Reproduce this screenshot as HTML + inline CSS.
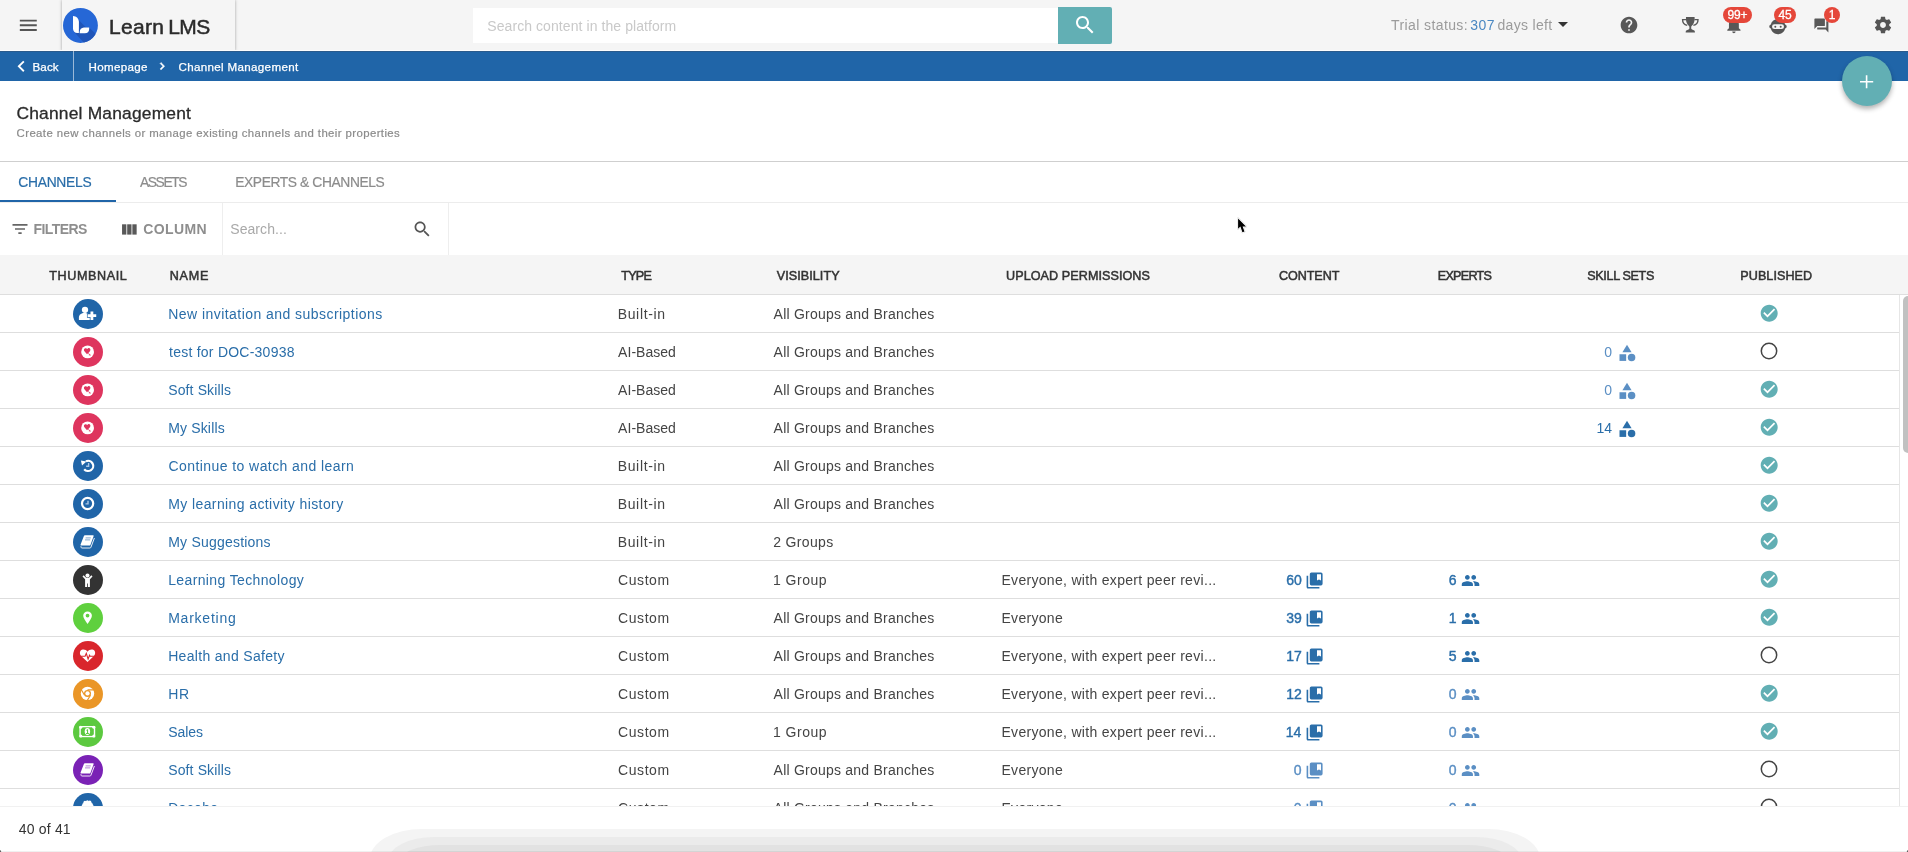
<!DOCTYPE html>
<html lang="en"><head><meta charset="utf-8"><title>Channel Management</title>
<style>
html,body{margin:0;padding:0}
body{width:1908px;height:852px;position:relative;overflow:hidden;background:#fff;font-family:"Liberation Sans",sans-serif}
.a{position:absolute;display:block}
.t{position:absolute;white-space:pre;line-height:1;margin:0;padding:0}
.ln{position:absolute;left:0;width:1899px;height:1px;background:#dedede}
.th{position:absolute;width:30px;height:30px;border-radius:50%;left:73px}
.bd{position:absolute;top:7px;height:16px;border-radius:8px;background:#e5473a;color:#fff;font-size:12px;font-weight:400;-webkit-text-stroke:0.3px #fff;line-height:16.500px;letter-spacing:-0.2px;text-align:center}
</style></head><body><div id="w" class="a" style="left:0;top:0;width:1908px;height:852px;will-change:transform">

<div class="a" style="left:0;top:0;width:1908px;height:51px;background:#f5f5f5"></div>
<div class="a" style="left:62px;top:0;width:173px;height:51px;background:#f5f5f5;box-shadow:0 0 3px rgba(0,0,0,.35)"></div>
<div class="a" style="left:0;top:51px;width:1908px;height:30px;background:#2065a8"></div>
<div class="a" style="left:0;top:50px;width:1908px;height:1px;background:#fdfdfd"></div>
<div class="a" style="left:0;top:51px;width:1908px;height:1px;background:#2b5b8c"></div>
<svg class="a" style="left:16.87px;top:13.84px" width="22.6" height="22.6" viewBox="0 0 24 24" fill="#555" ><path d="M3 18h18v-2H3v2zm0-5h18v-2H3v2zm0-7v2h18V6H3z"/></svg>
<svg class="a" style="left:63.100px;top:7.900px" width="34.900" height="34.900" viewBox="0 0 34.900 34.900"><defs><clipPath id="lc"><circle cx="17.450" cy="17.450" r="17.450"/></clipPath></defs><circle cx="17.450" cy="17.450" r="17.450" fill="#2667d6"/><path clip-path="url(#lc)" d="M15.900 12.300l7.200 7.300 3.100-.200 10 10-12 9-13.200-14.600 4.900-.5z" fill="#2055b8"/><path d="M10 8.100c3.500.200 5.900 2.600 5.900 6.200v10.800h-1.500c-2.700 0-4.400-2-4.400-4.700z" fill="#fff"/><path d="M26.200 19.400v1.500c0 2.600-1.700 4.400-4.300 4.400h-5.200v-1.300c0-2.500 1.700-4.300 4.300-4.400z" fill="#fff"/></svg>
<div class="a" style="left:473px;top:8px;width:586px;height:35px;background:#fff"></div>
<div class="a" style="left:1058px;top:7px;width:54px;height:37px;background:#62afb4;border-radius:0 2px 2px 0"></div>
<svg class="a" style="left:1073.2px;top:12.8px" width="24" height="24" viewBox="0 0 24 24" fill="#fff" ><path d="M15.5 14h-.79l-.28-.27C15.41 12.59 16 11.11 16 9.5 16 5.91 13.09 3 9.5 3S3 5.91 3 9.5 5.91 16 9.5 16c1.61 0 3.09-.59 4.23-1.57l.27.28v.79l5 4.99L20.49 19l-4.99-5zm-6 0C7.01 14 5 11.99 5 9.5S7.01 5 9.5 5 14 7.01 14 9.5 11.99 14 9.5 14z"/></svg>
<svg class="a" style="left:1550.9px;top:12.4px" width="24" height="24" viewBox="0 0 24 24" fill="#333" ><path d="M7 10l5 5 5-5z"/></svg>
<svg class="a" style="left:1619.4px;top:14.8px" width="20" height="20" viewBox="0 0 24 24" fill="#585858" ><path d="M12 2C6.48 2 2 6.48 2 12s4.48 10 10 10 10-4.48 10-10S17.52 2 12 2zm1 17h-2v-2h2v2zm2.07-7.75l-.9.92C13.45 12.9 13 13.5 13 15h-2v-.5c0-1.1.45-2.1 1.17-2.83l1.24-1.26c.37-.36.59-.86.59-1.41 0-1.1-.9-2-2-2s-2 .9-2 2H8c0-2.21 1.79-4 4-4s4 1.79 4 4c0 .88-.36 1.68-.93 2.25z"/></svg>
<svg class="a" style="left:1681px;top:16.100px" width="18.600" height="17" viewBox="0 0 18.600 17"><path fill="#585858" d="M5 .9h8.600c.1 2.300 0 4-.6 5.600-.5 1.500-1.300 2.700-2.400 3.500-.3.300-.4.600-.4 1v1.200c0 .6.300 1 .9 1.300l1.700.7c.7.300 1.100.8 1.100 1.500v.7h-9.200v-.7c0-.7.400-1.200 1.100-1.500l1.700-.7c.6-.300.900-.7.900-1.300v-1.200c0-.4-.1-.7-.4-1-1.100-.8-1.900-2-2.400-3.500-.6-1.600-.7-3.300-.6-5.600z"/><path fill="none" stroke="#585858" stroke-width="1.400" d="M5.200 3.600h-3.600c-.1 3 1.600 5.200 4.600 5.800M13.400 3.600h3.600c.1 3-1.600 5.200-4.600 5.800"/></svg>
<svg class="a" style="left:1724.0px;top:14.85px" width="19.8" height="19.8" viewBox="0 0 24 24" fill="#585858" ><path d="M12 22c1.1 0 2-.9 2-2h-4c0 1.1.89 2 2 2zm6-6v-5c0-3.07-1.64-5.64-4.5-6.32V4c0-.83-.67-1.5-1.5-1.5s-1.5.67-1.5 1.5v.68C7.63 5.36 6 7.92 6 11v5l-2 2v1h16v-1l-2-2z"/></svg>
<svg class="a" style="left:1769px;top:19px" width="18" height="15.500" viewBox="0 0 18 15.500"><path fill="#555" d="M9 0c3.600 0 6.500 2.300 7.100 5.600.9.200 1.600 1 1.600 2s-.7 1.800-1.600 2c-.6 3.300-3.500 5.600-7.100 5.600s-6.500-2.300-7.100-5.600c-.9-.2-1.600-1-1.600-2s.7-1.800 1.600-2c.6-3.300 3.500-5.600 7.100-5.600z"/><rect x="3" y="5.300" width="12" height="4.800" rx="2.400" fill="#f5f5f5"/><circle cx="6.300" cy="7.700" r="1" fill="#555"/><circle cx="11.700" cy="7.700" r="1" fill="#555"/></svg>
<svg class="a" style="left:1813.4px;top:16.6px" width="16.8" height="16.8" viewBox="0 0 24 24" fill="#585858" ><path d="M21 6h-2v9H6v2c0 .55.45 1 1 1h11l4 4V7c0-.55-.45-1-1-1zm-4 6V3c0-.55-.45-1-1-1H3c-.55 0-1 .45-1 1v14l4-4h10c.55 0 1-.45 1-1z"/></svg>
<svg class="a" style="left:1873px;top:15px" width="20" height="20" viewBox="0 0 24 24" fill="#555" ><path d="M19.43 12.98c.04-.32.07-.64.07-.98s-.03-.66-.07-.98l2.11-1.65c.19-.15.24-.42.12-.64l-2-3.46c-.12-.22-.39-.3-.61-.22l-2.49 1c-.52-.4-1.08-.73-1.69-.98l-.38-2.65C14.46 2.18 14.25 2 14 2h-4c-.25 0-.46.18-.49.42l-.38 2.65c-.61.25-1.17.59-1.69.98l-2.49-1c-.23-.09-.49 0-.61.22l-2 3.46c-.13.22-.07.49.12.64l2.11 1.65c-.04.32-.07.65-.07.98s.03.66.07.98l-2.11 1.65c-.19.15-.24.42-.12.64l2 3.46c.12.22.39.3.61.22l2.49-1c.52.4 1.08.73 1.69.98l.38 2.65c.03.24.24.42.49.42h4c.25 0 .46-.18.49-.42l.38-2.65c.61-.25 1.17-.59 1.69-.98l2.49 1c.23.09.49 0 .61-.22l2-3.46c.12-.22.07-.49-.12-.64l-2.11-1.65zM12 15.5c-1.93 0-3.5-1.57-3.5-3.5s1.57-3.5 3.5-3.5 3.5 1.57 3.5 3.5-1.57 3.5-3.5 3.5z"/></svg>
<div class="bd" style="left:1723px;width:29px">99+</div>
<div class="bd" style="left:1774px;width:22px">45</div>
<div class="bd" style="left:1824px;width:16px">1</div>
<div class="a" style="left:73px;top:51px;width:1px;height:30px;background:rgba(255,255,255,.55)"></div>
<svg class="a" style="left:9.7px;top:54.8px" width="22.6" height="22.6" viewBox="0 0 24 24" fill="#fff" ><path d="M15.41 7.41L14 6l-6 6 6 6 1.41-1.41L10.83 12z"/></svg>
<svg class="a" style="left:155.3px;top:58.8px" width="14.4" height="14.4" viewBox="0 0 24 24" fill="#fff" stroke="#fff" stroke-width="1"><path d="M10 6L8.59 7.41 13.17 12l-4.58 4.59L10 18l6-6z"/></svg>
<div class="a" style="left:1842px;top:56px;width:50px;height:50px;border-radius:50%;background:#62afb4;box-shadow:0 3px 5px rgba(0,0,0,.3)"></div>
<svg class="a" style="left:1856px;top:71px" width="22" height="22" viewBox="1856 71 22 22"><path d="M1860 81.750h13.200M1866.600 75.150v13.200" stroke="#fff" stroke-width="1.600" fill="none"/></svg>
<div class="a" style="left:0;top:161px;width:1908px;height:1px;background:#cfcfcf"></div>
<div class="a" style="left:0;top:202px;width:1908px;height:1px;background:#ececec"></div>
<div class="a" style="left:0;top:200px;width:116px;height:2px;background:#2065a8"></div>
<div class="a" style="left:222px;top:203px;width:1px;height:52px;background:#eee"></div>
<div class="a" style="left:448px;top:203px;width:1px;height:52px;background:#eee"></div>
<svg class="a" style="left:10.0px;top:219.25px" width="20" height="20" viewBox="0 0 24 24" fill="#666" ><path d="M10 18h4v-2h-4v2zM3 6v2h18V6H3zm3 7h12v-2H6v2z"/></svg>
<svg class="a" style="left:120px;top:220px" width="20" height="20" viewBox="120 220 20 20" fill="#595959"><rect x="122.050" y="224.300" width="4.300" height="10.300"/><rect x="127.200" y="224.300" width="4.300" height="10.300"/><rect x="132.350" y="224.300" width="4.300" height="10.300"/></svg>
<svg class="a" style="left:412.4px;top:219.2px" width="20.5" height="20.5" viewBox="0 0 24 24" fill="#555" ><path d="M15.5 14h-.79l-.28-.27C15.41 12.59 16 11.11 16 9.5 16 5.91 13.09 3 9.5 3S3 5.91 3 9.5 5.91 16 9.5 16c1.61 0 3.09-.59 4.23-1.57l.27.28v.79l5 4.99L20.49 19l-4.99-5zm-6 0C7.01 14 5 11.99 5 9.5S7.01 5 9.5 5 14 7.01 14 9.5 11.99 14 9.5 14z"/></svg>
<div class="a" style="left:0;top:255px;width:1908px;height:40px;background:#f5f5f5"></div>
<div class="ln" style="top:294px;width:1908px"></div>
<div class="ln" style="top:332px"></div>
<div class="th" style="top:299px;background:#2065a8"><svg class="a" style="left:0;top:0" width="30" height="30" viewBox="0 0 30 30" fill="#fff"><circle cx="12" cy="10.800" r="3.150"/><path d="M5.900 21v-2.300c0-3.100 2.400-4.700 5.500-4.700s5.500 1.600 5.500 4.700v2.300z"/><path stroke="#2065a8" stroke-width="1.300" d="M17.500 12.500h2.800v2.800h2.900v2.800h-2.900v2.800h-2.800v-2.800h-2.900v-2.800h2.900z"/><path d="M17.500 12.500h2.800v2.800h2.900v2.800h-2.900v2.800h-2.800v-2.800h-2.900v-2.800h2.900z"/></svg></div>
<svg class="a" style="left:1758.8px;top:302.7px" width="20.4" height="20.4" viewBox="0 0 24 24" fill="#62afb4" ><path d="M12 2C6.48 2 2 6.48 2 12s4.48 10 10 10 10-4.48 10-10S17.52 2 12 2zm-2 15l-5-5 1.41-1.41L10 14.17l7.59-7.59L19 8l-9 9z"/></svg>
<div class="ln" style="top:370px"></div>
<div class="th" style="top:337px;background:#de355e"><svg class="a" style="left:0;top:0" width="30" height="30" viewBox="0 0 30 30" fill="#fff"><circle cx="14.600" cy="14.900" r="6.400"/><path fill="#de355e" d="M14 17.200l-2.800-3.200c-1-1.700.4-3.400 2-2.700l.9.800 1-.9c1.600-.700 3 1 2 2.700l-1.700 2.200 1.300 1.300.2-.9.900 2.300-2.400-.8.900-.2-1.300-1.500z"/></svg></div>
<svg class="a" style="left:1616.5px;top:343.3px" width="20" height="20" viewBox="0 0 24 24" fill="#5b8fc4"><path d="M12 2l-5.500 9h11z"/><circle cx="17.500" cy="17.500" r="4.500"/><path d="M3 13.500h8v8H3z"/></svg>
<svg class="a" style="left:1759px;top:341.0px" width="20" height="20" viewBox="0 0 20 20"><circle cx="10" cy="10" r="7.700" fill="none" stroke="#444" stroke-width="1.500"/></svg>
<div class="ln" style="top:408px"></div>
<div class="th" style="top:375px;background:#de355e"><svg class="a" style="left:0;top:0" width="30" height="30" viewBox="0 0 30 30" fill="#fff"><circle cx="14.600" cy="14.900" r="6.400"/><path fill="#de355e" d="M14 17.200l-2.800-3.200c-1-1.700.4-3.400 2-2.700l.9.800 1-.9c1.600-.700 3 1 2 2.700l-1.700 2.200 1.300 1.300.2-.9.900 2.300-2.400-.8.900-.2-1.300-1.500z"/></svg></div>
<svg class="a" style="left:1616.5px;top:381.3px" width="20" height="20" viewBox="0 0 24 24" fill="#5b8fc4"><path d="M12 2l-5.500 9h11z"/><circle cx="17.500" cy="17.500" r="4.500"/><path d="M3 13.500h8v8H3z"/></svg>
<svg class="a" style="left:1758.8px;top:378.7px" width="20.4" height="20.4" viewBox="0 0 24 24" fill="#62afb4" ><path d="M12 2C6.48 2 2 6.48 2 12s4.48 10 10 10 10-4.48 10-10S17.52 2 12 2zm-2 15l-5-5 1.41-1.41L10 14.17l7.59-7.59L19 8l-9 9z"/></svg>
<div class="ln" style="top:446px"></div>
<div class="th" style="top:413px;background:#de355e"><svg class="a" style="left:0;top:0" width="30" height="30" viewBox="0 0 30 30" fill="#fff"><circle cx="14.600" cy="14.900" r="6.400"/><path fill="#de355e" d="M14 17.200l-2.800-3.200c-1-1.700.4-3.400 2-2.700l.9.800 1-.9c1.600-.700 3 1 2 2.700l-1.700 2.200 1.300 1.300.2-.9.900 2.300-2.400-.8.900-.2-1.300-1.500z"/></svg></div>
<svg class="a" style="left:1616.5px;top:419.3px" width="20" height="20" viewBox="0 0 24 24" fill="#2a6ea9"><path d="M12 2l-5.500 9h11z"/><circle cx="17.500" cy="17.500" r="4.500"/><path d="M3 13.500h8v8H3z"/></svg>
<svg class="a" style="left:1758.8px;top:416.7px" width="20.4" height="20.4" viewBox="0 0 24 24" fill="#62afb4" ><path d="M12 2C6.48 2 2 6.48 2 12s4.48 10 10 10 10-4.48 10-10S17.52 2 12 2zm-2 15l-5-5 1.41-1.41L10 14.17l7.59-7.59L19 8l-9 9z"/></svg>
<div class="ln" style="top:484px"></div>
<div class="th" style="top:451px;background:#2065a8"><svg class="a" style="left:0;top:0" width="30" height="30" viewBox="0 0 30 30" fill="#fff"><path fill="none" stroke="#fff" stroke-width="2.200" d="M12.940 10.280A5.100 5.100 0 1 1 11.200 18.180"/><path d="M7.900 9.400l5.600 1.200-4.500 4z"/><path fill="none" stroke="#a9c6e6" stroke-width="1.400" d="M15.600 12v3.200h-2.500"/></svg></div>
<svg class="a" style="left:1758.8px;top:454.7px" width="20.4" height="20.4" viewBox="0 0 24 24" fill="#62afb4" ><path d="M12 2C6.48 2 2 6.48 2 12s4.48 10 10 10 10-4.48 10-10S17.52 2 12 2zm-2 15l-5-5 1.41-1.41L10 14.17l7.59-7.59L19 8l-9 9z"/></svg>
<div class="ln" style="top:522px"></div>
<div class="th" style="top:489px;background:#2065a8"><svg class="a" style="left:0;top:0" width="30" height="30" viewBox="0 0 30 30" fill="#fff"><circle cx="14.600" cy="14.500" r="5.600" fill="none" stroke="#fff" stroke-width="2.200"/><path fill="none" stroke="#a9c6e6" stroke-width="1.400" d="M15 11.700v3.200h-2.500"/></svg></div>
<svg class="a" style="left:1758.8px;top:492.7px" width="20.4" height="20.4" viewBox="0 0 24 24" fill="#62afb4" ><path d="M12 2C6.48 2 2 6.48 2 12s4.48 10 10 10 10-4.48 10-10S17.52 2 12 2zm-2 15l-5-5 1.41-1.41L10 14.17l7.59-7.59L19 8l-9 9z"/></svg>
<div class="ln" style="top:560px"></div>
<div class="th" style="top:527px;background:#2065a8"><svg class="a" style="left:0;top:0" width="30" height="30" viewBox="0 0 30 30" fill="#fff"><path d="M11.900 8.300h8c.6 0 .9.400.7 1l-3.200 8.600c-.1.400-.4.600-.9.600h-8.200c-.6 0-.9-.500-.7-1l3.300-8.500c.2-.5.500-.7 1-.7z"/><path fill="none" stroke="#fff" stroke-width=".9" d="M7.900 19.200l.3 1.300c.1.400.3.500.7.500h8c.5 0 .8-.2 1-.7l3.500-9.300"/><path fill="none" stroke="#2065a8" stroke-opacity=".55" stroke-width="1" d="M12.600 10.900h5.200M12 12.900h5.200"/></svg></div>
<svg class="a" style="left:1758.8px;top:530.7px" width="20.4" height="20.4" viewBox="0 0 24 24" fill="#62afb4" ><path d="M12 2C6.48 2 2 6.48 2 12s4.48 10 10 10 10-4.48 10-10S17.52 2 12 2zm-2 15l-5-5 1.41-1.41L10 14.17l7.59-7.59L19 8l-9 9z"/></svg>
<div class="ln" style="top:598px"></div>
<div class="th" style="top:565px;background:#333333"><svg class="a" style="left:0;top:0" width="30" height="30" viewBox="0 0 30 30" fill="#fff"><circle cx="14.500" cy="10.500" r="2.050"/><path d="M10.600 10.300l2.500 2.500h2.800l2.500-2.500 1.100 1.100-2.600 2.800v7.900h-2v-3.700h-.8v3.700h-2v-7.900l-2.600-2.800z"/></svg></div>
<svg class="a" style="left:1305.1px;top:570.5px" width="19.2" height="19.2" viewBox="0 0 24 24" fill="#2a6ea9" ><path d="M4 6H2v14c0 1.1.9 2 2 2h14v-2H4V6zm16-4H8c-1.1 0-2 .9-2 2v12c0 1.1.9 2 2 2h12c1.1 0 2-.9 2-2V4c0-1.1-.9-2-2-2zm0 10l-2.5-1.5L15 12V4h5v8z"/></svg>
<svg class="a" style="left:1460.9px;top:570.7px" width="19.1" height="19.1" viewBox="0 0 24 24" fill="#2a6ea9" ><path d="M16 11c1.66 0 2.99-1.34 2.99-3S17.66 5 16 5c-1.66 0-3 1.34-3 3s1.34 3 3 3zm-8 0c1.66 0 2.99-1.34 2.99-3S9.66 5 8 5C6.34 5 5 6.34 5 8s1.34 3 3 3zm0 2c-2.33 0-7 1.17-7 3.5V19h14v-2.5c0-2.33-4.67-3.5-7-3.5zm8 0c-.29 0-.62.02-.97.05 1.16.84 1.97 1.97 1.97 3.45V19h6v-2.5c0-2.33-4.67-3.5-7-3.5z"/></svg>
<svg class="a" style="left:1758.8px;top:568.7px" width="20.4" height="20.4" viewBox="0 0 24 24" fill="#62afb4" ><path d="M12 2C6.48 2 2 6.48 2 12s4.48 10 10 10 10-4.48 10-10S17.52 2 12 2zm-2 15l-5-5 1.41-1.41L10 14.17l7.59-7.59L19 8l-9 9z"/></svg>
<div class="ln" style="top:636px"></div>
<div class="th" style="top:603px;background:#5fd03e"><svg class="a" style="left:0;top:0" width="30" height="30" viewBox="0 0 30 30" fill="#fff"><path fill-rule="evenodd" d="M14.550 8.400c2.500 0 4.350 1.900 4.350 4.300 0 2.100-2.350 5.200-4.350 8.300-2-3.100-4.350-6.200-4.350-8.300 0-2.400 1.850-4.300 4.350-4.300zm0 2.300a1.900 1.900 0 1 0 0 3.800 1.900 1.900 0 0 0 0-3.800z"/></svg></div>
<svg class="a" style="left:1305.1px;top:608.5px" width="19.2" height="19.2" viewBox="0 0 24 24" fill="#2a6ea9" ><path d="M4 6H2v14c0 1.1.9 2 2 2h14v-2H4V6zm16-4H8c-1.1 0-2 .9-2 2v12c0 1.1.9 2 2 2h12c1.1 0 2-.9 2-2V4c0-1.1-.9-2-2-2zm0 10l-2.5-1.5L15 12V4h5v8z"/></svg>
<svg class="a" style="left:1460.9px;top:608.7px" width="19.1" height="19.1" viewBox="0 0 24 24" fill="#2a6ea9" ><path d="M16 11c1.66 0 2.99-1.34 2.99-3S17.66 5 16 5c-1.66 0-3 1.34-3 3s1.34 3 3 3zm-8 0c1.66 0 2.99-1.34 2.99-3S9.66 5 8 5C6.34 5 5 6.34 5 8s1.34 3 3 3zm0 2c-2.33 0-7 1.17-7 3.5V19h14v-2.5c0-2.33-4.67-3.5-7-3.5zm8 0c-.29 0-.62.02-.97.05 1.16.84 1.97 1.97 1.97 3.45V19h6v-2.5c0-2.33-4.67-3.5-7-3.5z"/></svg>
<svg class="a" style="left:1758.8px;top:606.7px" width="20.4" height="20.4" viewBox="0 0 24 24" fill="#62afb4" ><path d="M12 2C6.48 2 2 6.48 2 12s4.48 10 10 10 10-4.48 10-10S17.52 2 12 2zm-2 15l-5-5 1.41-1.41L10 14.17l7.59-7.59L19 8l-9 9z"/></svg>
<div class="ln" style="top:674px"></div>
<div class="th" style="top:641px;background:#d9262c"><svg class="a" style="left:0;top:0" width="30" height="30" viewBox="0 0 30 30" fill="#fff"><path d="M14.550 21l-6.400-6.100c-2.200-2.300-1.300-5.800 1.700-6.300 1.900-.2 3.700.7 4.700 2.200 1-1.500 2.800-2.400 4.700-2.200 3 .5 3.900 4 1.700 6.300z"/><path fill="none" stroke="#d9262c" stroke-width="1.100" d="M7.500 15.300h4.600l1.200-3 1.800 5.800 1.400-3.900.7 1.100h5"/></svg></div>
<svg class="a" style="left:1305.1px;top:646.5px" width="19.2" height="19.2" viewBox="0 0 24 24" fill="#2a6ea9" ><path d="M4 6H2v14c0 1.1.9 2 2 2h14v-2H4V6zm16-4H8c-1.1 0-2 .9-2 2v12c0 1.1.9 2 2 2h12c1.1 0 2-.9 2-2V4c0-1.1-.9-2-2-2zm0 10l-2.5-1.5L15 12V4h5v8z"/></svg>
<svg class="a" style="left:1460.9px;top:646.7px" width="19.1" height="19.1" viewBox="0 0 24 24" fill="#2a6ea9" ><path d="M16 11c1.66 0 2.99-1.34 2.99-3S17.66 5 16 5c-1.66 0-3 1.34-3 3s1.34 3 3 3zm-8 0c1.66 0 2.99-1.34 2.99-3S9.66 5 8 5C6.34 5 5 6.34 5 8s1.34 3 3 3zm0 2c-2.33 0-7 1.17-7 3.5V19h14v-2.5c0-2.33-4.67-3.5-7-3.5zm8 0c-.29 0-.62.02-.97.05 1.16.84 1.97 1.97 1.97 3.45V19h6v-2.5c0-2.33-4.67-3.5-7-3.5z"/></svg>
<svg class="a" style="left:1759px;top:645.0px" width="20" height="20" viewBox="0 0 20 20"><circle cx="10" cy="10" r="7.700" fill="none" stroke="#444" stroke-width="1.500"/></svg>
<div class="ln" style="top:712px"></div>
<div class="th" style="top:679px;background:#ea9627"><svg class="a" style="left:0;top:0" width="30" height="30" viewBox="0 0 30 30" fill="#fff"><circle cx="14.500" cy="14.400" r="6.700"/><circle cx="14.500" cy="14.400" r="3.500" fill="#ea9627"/><circle cx="14.500" cy="14.400" r="2.150"/><path fill="none" stroke="#ea9627" stroke-width="1.100" d="M14.500 10.900h6.200M11.500 16.100l-3.300-5.600M17.500 16.200l-3.200 5.200"/></svg></div>
<svg class="a" style="left:1305.1px;top:684.5px" width="19.2" height="19.2" viewBox="0 0 24 24" fill="#2a6ea9" ><path d="M4 6H2v14c0 1.1.9 2 2 2h14v-2H4V6zm16-4H8c-1.1 0-2 .9-2 2v12c0 1.1.9 2 2 2h12c1.1 0 2-.9 2-2V4c0-1.1-.9-2-2-2zm0 10l-2.5-1.5L15 12V4h5v8z"/></svg>
<svg class="a" style="left:1460.9px;top:684.7px" width="19.1" height="19.1" viewBox="0 0 24 24" fill="#5b8fc4" ><path d="M16 11c1.66 0 2.99-1.34 2.99-3S17.66 5 16 5c-1.66 0-3 1.34-3 3s1.34 3 3 3zm-8 0c1.66 0 2.99-1.34 2.99-3S9.66 5 8 5C6.34 5 5 6.34 5 8s1.34 3 3 3zm0 2c-2.33 0-7 1.17-7 3.5V19h14v-2.5c0-2.33-4.67-3.5-7-3.5zm8 0c-.29 0-.62.02-.97.05 1.16.84 1.97 1.97 1.97 3.45V19h6v-2.5c0-2.33-4.67-3.5-7-3.5z"/></svg>
<svg class="a" style="left:1758.8px;top:682.7px" width="20.4" height="20.4" viewBox="0 0 24 24" fill="#62afb4" ><path d="M12 2C6.48 2 2 6.48 2 12s4.48 10 10 10 10-4.48 10-10S17.52 2 12 2zm-2 15l-5-5 1.41-1.41L10 14.17l7.59-7.59L19 8l-9 9z"/></svg>
<div class="ln" style="top:750px"></div>
<div class="th" style="top:717px;background:#5cc93f"><svg class="a" style="left:0;top:0" width="30" height="30" viewBox="0 0 30 30" fill="#fff"><rect x="6.400" y="9" width="15.800" height="11.200"/><rect x="7.800" y="10.300" width="13" height="8.600" fill="#5cc93f"/><circle cx="7.800" cy="10.300" r="1.500"/><circle cx="20.800" cy="10.300" r="1.500"/><circle cx="7.800" cy="18.900" r="1.500"/><circle cx="20.800" cy="18.900" r="1.500"/><ellipse cx="14.400" cy="14.500" rx="2.700" ry="3.400"/><path fill="#5cc93f" d="M13.300 12.900l1.200-.7h.6v3.900h.8v.8h-2.800v-.8h.9v-2.700l-.7.300z"/></svg></div>
<svg class="a" style="left:1305.1px;top:722.5px" width="19.2" height="19.2" viewBox="0 0 24 24" fill="#2a6ea9" ><path d="M4 6H2v14c0 1.1.9 2 2 2h14v-2H4V6zm16-4H8c-1.1 0-2 .9-2 2v12c0 1.1.9 2 2 2h12c1.1 0 2-.9 2-2V4c0-1.1-.9-2-2-2zm0 10l-2.5-1.5L15 12V4h5v8z"/></svg>
<svg class="a" style="left:1460.9px;top:722.7px" width="19.1" height="19.1" viewBox="0 0 24 24" fill="#5b8fc4" ><path d="M16 11c1.66 0 2.99-1.34 2.99-3S17.66 5 16 5c-1.66 0-3 1.34-3 3s1.34 3 3 3zm-8 0c1.66 0 2.99-1.34 2.99-3S9.66 5 8 5C6.34 5 5 6.34 5 8s1.34 3 3 3zm0 2c-2.33 0-7 1.17-7 3.5V19h14v-2.5c0-2.33-4.67-3.5-7-3.5zm8 0c-.29 0-.62.02-.97.05 1.16.84 1.97 1.97 1.97 3.45V19h6v-2.5c0-2.33-4.67-3.5-7-3.5z"/></svg>
<svg class="a" style="left:1758.8px;top:720.7px" width="20.4" height="20.4" viewBox="0 0 24 24" fill="#62afb4" ><path d="M12 2C6.48 2 2 6.48 2 12s4.48 10 10 10 10-4.48 10-10S17.52 2 12 2zm-2 15l-5-5 1.41-1.41L10 14.17l7.59-7.59L19 8l-9 9z"/></svg>
<div class="ln" style="top:788px"></div>
<div class="th" style="top:755px;background:#7a22b5"><svg class="a" style="left:0;top:0" width="30" height="30" viewBox="0 0 30 30" fill="#fff"><path d="M11.900 8.300h8c.6 0 .9.400.7 1l-3.200 8.600c-.1.400-.4.600-.9.600h-8.200c-.6 0-.9-.500-.7-1l3.300-8.500c.2-.5.500-.7 1-.7z"/><path fill="none" stroke="#fff" stroke-width=".9" d="M7.900 19.200l.3 1.300c.1.400.3.500.7.500h8c.5 0 .8-.2 1-.7l3.500-9.300"/><path fill="none" stroke="#7a22b5" stroke-opacity=".55" stroke-width="1" d="M12.600 10.900h5.200M12 12.900h5.200"/></svg></div>
<svg class="a" style="left:1305.1px;top:760.5px" width="19.2" height="19.2" viewBox="0 0 24 24" fill="#5b8fc4" ><path d="M4 6H2v14c0 1.1.9 2 2 2h14v-2H4V6zm16-4H8c-1.1 0-2 .9-2 2v12c0 1.1.9 2 2 2h12c1.1 0 2-.9 2-2V4c0-1.1-.9-2-2-2zm0 10l-2.5-1.5L15 12V4h5v8z"/></svg>
<svg class="a" style="left:1460.9px;top:760.7px" width="19.1" height="19.1" viewBox="0 0 24 24" fill="#5b8fc4" ><path d="M16 11c1.66 0 2.99-1.34 2.99-3S17.66 5 16 5c-1.66 0-3 1.34-3 3s1.34 3 3 3zm-8 0c1.66 0 2.99-1.34 2.99-3S9.66 5 8 5C6.34 5 5 6.34 5 8s1.34 3 3 3zm0 2c-2.33 0-7 1.17-7 3.5V19h14v-2.5c0-2.33-4.67-3.5-7-3.5zm8 0c-.29 0-.62.02-.97.05 1.16.84 1.97 1.97 1.97 3.45V19h6v-2.5c0-2.33-4.67-3.5-7-3.5z"/></svg>
<svg class="a" style="left:1759px;top:759.0px" width="20" height="20" viewBox="0 0 20 20"><circle cx="10" cy="10" r="7.700" fill="none" stroke="#444" stroke-width="1.500"/></svg>
<div class="ln" style="top:826px"></div>
<div class="th" style="top:793px;background:#2065a8"><svg class="a" style="left:0;top:0" width="30" height="30" viewBox="0 0 30 30" fill="#fff"><circle cx="14.600" cy="14.600" r="6.300"/><circle cx="12" cy="9.400" r="1.600"/><circle cx="16.800" cy="9.200" r="1.600"/><circle cx="14.400" cy="8.800" r="1.500"/></svg></div>
<svg class="a" style="left:1305.1px;top:798.5px" width="19.2" height="19.2" viewBox="0 0 24 24" fill="#5b8fc4" ><path d="M4 6H2v14c0 1.1.9 2 2 2h14v-2H4V6zm16-4H8c-1.1 0-2 .9-2 2v12c0 1.1.9 2 2 2h12c1.1 0 2-.9 2-2V4c0-1.1-.9-2-2-2zm0 10l-2.5-1.5L15 12V4h5v8z"/></svg>
<svg class="a" style="left:1460.9px;top:798.7px" width="19.1" height="19.1" viewBox="0 0 24 24" fill="#5b8fc4" ><path d="M16 11c1.66 0 2.99-1.34 2.99-3S17.66 5 16 5c-1.66 0-3 1.34-3 3s1.34 3 3 3zm-8 0c1.66 0 2.99-1.34 2.99-3S9.66 5 8 5C6.34 5 5 6.34 5 8s1.34 3 3 3zm0 2c-2.33 0-7 1.17-7 3.5V19h14v-2.5c0-2.33-4.67-3.5-7-3.5zm8 0c-.29 0-.62.02-.97.05 1.16.84 1.97 1.97 1.97 3.45V19h6v-2.5c0-2.33-4.67-3.5-7-3.5z"/></svg>
<svg class="a" style="left:1759px;top:797.0px" width="20" height="20" viewBox="0 0 20 20"><circle cx="10" cy="10" r="7.700" fill="none" stroke="#444" stroke-width="1.500"/></svg>
<div class="t" style="left:109.03px;top:16.12px;font-size:21px;font-weight:400;color:#2b2b2b;letter-spacing:0.278px;-webkit-text-stroke:0.5px #2b2b2b;">Learn</div>
<div class="t" style="left:168.23px;top:16.12px;font-size:21px;font-weight:400;color:#2b2b2b;letter-spacing:-0.547px;-webkit-text-stroke:0.5px #2b2b2b;">LMS</div>
<div class="t" style="left:487.27px;top:18.75px;font-size:14px;font-weight:400;color:#c9c9c9;letter-spacing:0.076px;">Search content in the platform</div>
<div class="t" style="left:1391.07px;top:18.15px;font-size:14px;font-weight:400;color:#9b9b9b;letter-spacing:0.395px;">Trial status:</div>
<div class="t" style="left:1470.13px;top:18.15px;font-size:14px;font-weight:400;color:#4a88c2;letter-spacing:0.508px;">307</div>
<div class="t" style="left:1497.41px;top:18.15px;font-size:14px;font-weight:400;color:#9b9b9b;letter-spacing:0.324px;">days left</div>
<div class="t" style="left:32.54px;top:61.08px;font-size:11.6px;font-weight:400;color:#fff;letter-spacing:0.105px;-webkit-text-stroke:0.25px #fff;">Back</div>
<div class="t" style="left:88.54px;top:61.08px;font-size:11.6px;font-weight:400;color:#fff;letter-spacing:0.319px;-webkit-text-stroke:0.25px #fff;">Homepage</div>
<div class="t" style="left:178.49px;top:61.08px;font-size:11.6px;font-weight:400;color:#fff;letter-spacing:0.329px;-webkit-text-stroke:0.25px #fff;">Channel Management</div>
<div class="t" style="left:16.49px;top:105.37px;font-size:17.4px;font-weight:400;color:#2b2b2b;letter-spacing:0.195px;-webkit-text-stroke:0.3px #2b2b2b;">Channel Management</div>
<div class="t" style="left:16.57px;top:128.35px;font-size:11.4px;font-weight:400;color:#8a8a8a;letter-spacing:0.399px;-webkit-text-stroke:0.2px #8a8a8a;">Create new channels or manage existing channels and their properties</div>
<div class="t" style="left:18.21px;top:175.52px;font-size:13.8px;font-weight:400;color:#2a6ea9;letter-spacing:-0.232px;-webkit-text-stroke:0.2px #2a6ea9;">CHANNELS</div>
<div class="t" style="left:139.93px;top:175.52px;font-size:13.8px;font-weight:400;color:#8c8c8c;letter-spacing:-1.366px;-webkit-text-stroke:0.2px #8c8c8c;">ASSETS</div>
<div class="t" style="left:235.25px;top:175.52px;font-size:13.8px;font-weight:400;color:#8c8c8c;letter-spacing:-0.392px;-webkit-text-stroke:0.2px #8c8c8c;">EXPERTS &amp; CHANNELS</div>
<div class="t" style="left:33.50px;top:222.35px;font-size:14px;font-weight:700;color:#8e8e8e;letter-spacing:-0.593px;">FILTERS</div>
<div class="t" style="left:143.16px;top:222.35px;font-size:14px;font-weight:700;color:#8e8e8e;letter-spacing:0.423px;">COLUMN</div>
<div class="t" style="left:230.22px;top:222.35px;font-size:14px;font-weight:400;color:#a9a9a9;letter-spacing:0.071px;">Search...</div>
<div class="t" style="left:49.25px;top:270.33px;font-size:12.6px;font-weight:400;color:#333;letter-spacing:0.589px;-webkit-text-stroke:0.5px #333;">THUMBNAIL</div>
<div class="t" style="left:169.75px;top:270.33px;font-size:12.6px;font-weight:400;color:#333;letter-spacing:0.749px;-webkit-text-stroke:0.5px #333;">NAME</div>
<div class="t" style="left:621.25px;top:270.33px;font-size:12.6px;font-weight:400;color:#333;letter-spacing:-0.771px;-webkit-text-stroke:0.5px #333;">TYPE</div>
<div class="t" style="left:776.75px;top:270.33px;font-size:12.6px;font-weight:400;color:#333;letter-spacing:0.056px;-webkit-text-stroke:0.5px #333;">VISIBILITY</div>
<div class="t" style="left:1006.09px;top:270.33px;font-size:12.6px;font-weight:400;color:#333;letter-spacing:0.063px;-webkit-text-stroke:0.5px #333;">UPLOAD PERMISSIONS</div>
<div class="t" style="left:1279.00px;top:270.33px;font-size:12.6px;font-weight:400;color:#333;letter-spacing:-0.083px;-webkit-text-stroke:0.5px #333;">CONTENT</div>
<div class="t" style="left:1437.75px;top:270.33px;font-size:12.6px;font-weight:400;color:#333;letter-spacing:-0.723px;-webkit-text-stroke:0.5px #333;">EXPERTS</div>
<div class="t" style="left:1587.23px;top:270.33px;font-size:12.6px;font-weight:400;color:#333;letter-spacing:-0.343px;-webkit-text-stroke:0.5px #333;">SKILL SETS</div>
<div class="t" style="left:1740.25px;top:270.33px;font-size:12.6px;font-weight:400;color:#333;letter-spacing:0.068px;-webkit-text-stroke:0.5px #333;">PUBLISHED</div>
<div class="t" style="left:168.20px;top:307.35px;font-size:14px;font-weight:400;color:#2a6ea9;letter-spacing:0.453px;">New invitation and subscriptions</div>
<div class="t" style="left:617.70px;top:307.35px;font-size:14px;font-weight:400;color:#444;letter-spacing:0.653px;">Built-in</div>
<div class="t" style="left:773.61px;top:307.35px;font-size:14px;font-weight:400;color:#444;letter-spacing:0.223px;">All Groups and Branches</div>
<div class="t" style="left:169.12px;top:345.35px;font-size:14px;font-weight:400;color:#2a6ea9;letter-spacing:0.233px;">test for DOC-30938</div>
<div class="t" style="left:618.11px;top:345.35px;font-size:14px;font-weight:400;color:#444;letter-spacing:0.030px;">AI-Based</div>
<div class="t" style="left:773.61px;top:345.35px;font-size:14px;font-weight:400;color:#444;letter-spacing:0.223px;">All Groups and Branches</div>
<div class="t" style="left:1604.28px;top:344.85px;font-size:14px;font-weight:400;color:#5b8fc4;letter-spacing:0.000px;">0</div>
<div class="t" style="left:168.22px;top:383.35px;font-size:14px;font-weight:400;color:#2a6ea9;letter-spacing:0.128px;">Soft Skills</div>
<div class="t" style="left:618.11px;top:383.35px;font-size:14px;font-weight:400;color:#444;letter-spacing:0.030px;">AI-Based</div>
<div class="t" style="left:773.61px;top:383.35px;font-size:14px;font-weight:400;color:#444;letter-spacing:0.223px;">All Groups and Branches</div>
<div class="t" style="left:1604.28px;top:382.85px;font-size:14px;font-weight:400;color:#5b8fc4;letter-spacing:0.000px;">0</div>
<div class="t" style="left:168.20px;top:421.35px;font-size:14px;font-weight:400;color:#2a6ea9;letter-spacing:0.157px;">My Skills</div>
<div class="t" style="left:618.11px;top:421.35px;font-size:14px;font-weight:400;color:#444;letter-spacing:0.030px;">AI-Based</div>
<div class="t" style="left:773.61px;top:421.35px;font-size:14px;font-weight:400;color:#444;letter-spacing:0.223px;">All Groups and Branches</div>
<div class="t" style="left:1596.50px;top:420.85px;font-size:14px;font-weight:400;color:#2a6ea9;letter-spacing:0.000px;">14</div>
<div class="t" style="left:168.53px;top:459.35px;font-size:14px;font-weight:400;color:#2a6ea9;letter-spacing:0.425px;">Continue to watch and learn</div>
<div class="t" style="left:617.70px;top:459.35px;font-size:14px;font-weight:400;color:#444;letter-spacing:0.653px;">Built-in</div>
<div class="t" style="left:773.61px;top:459.35px;font-size:14px;font-weight:400;color:#444;letter-spacing:0.223px;">All Groups and Branches</div>
<div class="t" style="left:168.20px;top:497.35px;font-size:14px;font-weight:400;color:#2a6ea9;letter-spacing:0.400px;">My learning activity history</div>
<div class="t" style="left:617.70px;top:497.35px;font-size:14px;font-weight:400;color:#444;letter-spacing:0.653px;">Built-in</div>
<div class="t" style="left:773.61px;top:497.35px;font-size:14px;font-weight:400;color:#444;letter-spacing:0.223px;">All Groups and Branches</div>
<div class="t" style="left:168.20px;top:535.35px;font-size:14px;font-weight:400;color:#2a6ea9;letter-spacing:0.216px;">My Suggestions</div>
<div class="t" style="left:617.70px;top:535.35px;font-size:14px;font-weight:400;color:#444;letter-spacing:0.653px;">Built-in</div>
<div class="t" style="left:773.24px;top:535.35px;font-size:14px;font-weight:400;color:#444;letter-spacing:0.337px;">2 Groups</div>
<div class="t" style="left:168.20px;top:573.35px;font-size:14px;font-weight:400;color:#2a6ea9;letter-spacing:0.371px;">Learning Technology</div>
<div class="t" style="left:617.98px;top:573.35px;font-size:14px;font-weight:400;color:#444;letter-spacing:0.591px;">Custom</div>
<div class="t" style="left:772.90px;top:573.35px;font-size:14px;font-weight:400;color:#444;letter-spacing:0.517px;">1 Group</div>
<div class="t" style="left:1001.45px;top:573.35px;font-size:14px;font-weight:400;color:#444;letter-spacing:0.307px;">Everyone, with expert peer revi...</div>
<div class="t" style="left:1286.20px;top:573.35px;font-size:14px;font-weight:400;color:#2a6ea9;letter-spacing:0.000px;-webkit-text-stroke:0.4px #2a6ea9;">60</div>
<div class="t" style="left:1448.83px;top:573.35px;font-size:14px;font-weight:400;color:#2a6ea9;letter-spacing:0.000px;-webkit-text-stroke:0.4px #2a6ea9;">6</div>
<div class="t" style="left:168.20px;top:611.35px;font-size:14px;font-weight:400;color:#2a6ea9;letter-spacing:0.766px;">Marketing</div>
<div class="t" style="left:617.98px;top:611.35px;font-size:14px;font-weight:400;color:#444;letter-spacing:0.591px;">Custom</div>
<div class="t" style="left:773.61px;top:611.35px;font-size:14px;font-weight:400;color:#444;letter-spacing:0.223px;">All Groups and Branches</div>
<div class="t" style="left:1001.45px;top:611.35px;font-size:14px;font-weight:400;color:#444;letter-spacing:0.303px;">Everyone</div>
<div class="t" style="left:1286.20px;top:611.35px;font-size:14px;font-weight:400;color:#2a6ea9;letter-spacing:0.000px;-webkit-text-stroke:0.4px #2a6ea9;">39</div>
<div class="t" style="left:1448.87px;top:611.35px;font-size:14px;font-weight:400;color:#2a6ea9;letter-spacing:0.000px;-webkit-text-stroke:0.4px #2a6ea9;">1</div>
<div class="t" style="left:168.20px;top:649.35px;font-size:14px;font-weight:400;color:#2a6ea9;letter-spacing:0.316px;">Health and Safety</div>
<div class="t" style="left:617.98px;top:649.35px;font-size:14px;font-weight:400;color:#444;letter-spacing:0.591px;">Custom</div>
<div class="t" style="left:773.61px;top:649.35px;font-size:14px;font-weight:400;color:#444;letter-spacing:0.223px;">All Groups and Branches</div>
<div class="t" style="left:1001.45px;top:649.35px;font-size:14px;font-weight:400;color:#444;letter-spacing:0.307px;">Everyone, with expert peer revi...</div>
<div class="t" style="left:1286.20px;top:649.35px;font-size:14px;font-weight:400;color:#2a6ea9;letter-spacing:0.000px;-webkit-text-stroke:0.4px #2a6ea9;">17</div>
<div class="t" style="left:1448.77px;top:649.35px;font-size:14px;font-weight:400;color:#2a6ea9;letter-spacing:0.000px;-webkit-text-stroke:0.4px #2a6ea9;">5</div>
<div class="t" style="left:168.20px;top:687.35px;font-size:14px;font-weight:400;color:#2a6ea9;letter-spacing:0.803px;">HR</div>
<div class="t" style="left:617.98px;top:687.35px;font-size:14px;font-weight:400;color:#444;letter-spacing:0.591px;">Custom</div>
<div class="t" style="left:773.61px;top:687.35px;font-size:14px;font-weight:400;color:#444;letter-spacing:0.223px;">All Groups and Branches</div>
<div class="t" style="left:1001.45px;top:687.35px;font-size:14px;font-weight:400;color:#444;letter-spacing:0.307px;">Everyone, with expert peer revi...</div>
<div class="t" style="left:1286.20px;top:687.35px;font-size:14px;font-weight:400;color:#2a6ea9;letter-spacing:0.000px;-webkit-text-stroke:0.4px #2a6ea9;">12</div>
<div class="t" style="left:1448.73px;top:687.35px;font-size:14px;font-weight:400;color:#5b8fc4;letter-spacing:0.000px;-webkit-text-stroke:0.4px #5b8fc4;">0</div>
<div class="t" style="left:168.22px;top:725.35px;font-size:14px;font-weight:400;color:#2a6ea9;letter-spacing:-0.061px;">Sales</div>
<div class="t" style="left:617.98px;top:725.35px;font-size:14px;font-weight:400;color:#444;letter-spacing:0.591px;">Custom</div>
<div class="t" style="left:772.90px;top:725.35px;font-size:14px;font-weight:400;color:#444;letter-spacing:0.517px;">1 Group</div>
<div class="t" style="left:1001.45px;top:725.35px;font-size:14px;font-weight:400;color:#444;letter-spacing:0.307px;">Everyone, with expert peer revi...</div>
<div class="t" style="left:1285.74px;top:725.35px;font-size:14px;font-weight:400;color:#2a6ea9;letter-spacing:0.000px;-webkit-text-stroke:0.4px #2a6ea9;">14</div>
<div class="t" style="left:1448.73px;top:725.35px;font-size:14px;font-weight:400;color:#5b8fc4;letter-spacing:0.000px;-webkit-text-stroke:0.4px #5b8fc4;">0</div>
<div class="t" style="left:168.22px;top:763.35px;font-size:14px;font-weight:400;color:#2a6ea9;letter-spacing:0.128px;">Soft Skills</div>
<div class="t" style="left:617.98px;top:763.35px;font-size:14px;font-weight:400;color:#444;letter-spacing:0.591px;">Custom</div>
<div class="t" style="left:773.61px;top:763.35px;font-size:14px;font-weight:400;color:#444;letter-spacing:0.223px;">All Groups and Branches</div>
<div class="t" style="left:1001.45px;top:763.35px;font-size:14px;font-weight:400;color:#444;letter-spacing:0.303px;">Everyone</div>
<div class="t" style="left:1293.63px;top:763.35px;font-size:14px;font-weight:400;color:#5b8fc4;letter-spacing:0.000px;-webkit-text-stroke:0.4px #5b8fc4;">0</div>
<div class="t" style="left:1448.73px;top:763.35px;font-size:14px;font-weight:400;color:#5b8fc4;letter-spacing:0.000px;-webkit-text-stroke:0.4px #5b8fc4;">0</div>
<div class="t" style="left:168.20px;top:801.35px;font-size:14px;font-weight:400;color:#2a6ea9;letter-spacing:0.315px;">Docebo</div>
<div class="t" style="left:617.98px;top:801.35px;font-size:14px;font-weight:400;color:#444;letter-spacing:0.591px;">Custom</div>
<div class="t" style="left:773.61px;top:801.35px;font-size:14px;font-weight:400;color:#444;letter-spacing:0.223px;">All Groups and Branches</div>
<div class="t" style="left:1001.45px;top:801.35px;font-size:14px;font-weight:400;color:#444;letter-spacing:0.303px;">Everyone</div>
<div class="t" style="left:1293.63px;top:801.35px;font-size:14px;font-weight:400;color:#5b8fc4;letter-spacing:0.000px;-webkit-text-stroke:0.4px #5b8fc4;">0</div>
<div class="t" style="left:1448.73px;top:801.35px;font-size:14px;font-weight:400;color:#5b8fc4;letter-spacing:0.000px;-webkit-text-stroke:0.4px #5b8fc4;">0</div>
<div class="t" style="left:18.75px;top:821.65px;font-size:14px;font-weight:400;color:#333;letter-spacing:0.183px;z-index:5;">40 of 41</div>
<div class="a" style="left:0;top:0;width:1908px;height:852px;z-index:3;overflow:hidden">
<div class="a" style="left:0;top:806px;width:1908px;height:46px;background:#fff"></div>
<div class="a" style="left:0;top:806px;width:1908px;height:1px;background:#f1f1f1"></div>
<div class="a" style="left:370px;top:829px;width:1170px;height:60px;background:#f4f4f4;border-radius:52px/30px"></div>
<div class="a" style="left:388px;top:837px;width:1134px;height:60px;background:#ebebeb;border-radius:46px/24px"></div>
<div class="a" style="left:400px;top:845px;width:1108px;height:60px;background:#e2e2e2;border-radius:40px/16px"></div>
<div class="a" style="left:0;top:851px;width:1908px;height:1px;background:rgba(0,0,0,.06)"></div>
<div class="a" style="left:0;top:850px;width:3px;height:2px;background:radial-gradient(circle at 100% 0,rgba(0,0,0,0) 2px,#333 3.200px)"></div>
<div class="a" style="left:1905px;top:850px;width:3px;height:2px;background:radial-gradient(circle at 0 0,rgba(0,0,0,0) 2px,#333 3.200px)"></div>
<div class="a" style="left:1899px;top:295px;width:1px;height:511px;background:#e6e6e6"></div>
<div class="a" style="left:1903px;top:296px;width:10px;height:157px;border-radius:5px;background:#c1c1c1"></div>
<svg class="a" style="left:1230px;top:210px" width="30" height="30" viewBox="1230 210 30 30"><path d="M1238.100 218.400v10.300l2.300-2.100 2 5.700 2.100-.7-1.900-5h3.400z" fill="#000" stroke="#fff" stroke-width="1.700" stroke-linejoin="round" style="filter:drop-shadow(0 .5px .6px rgba(0,0,0,.35))"/><path d="M1238.100 218.400v10.300l2.300-2.100 2 5.700 2.100-.7-1.900-5h3.400z" fill="#000"/></svg>
</div>
</div></body></html>
